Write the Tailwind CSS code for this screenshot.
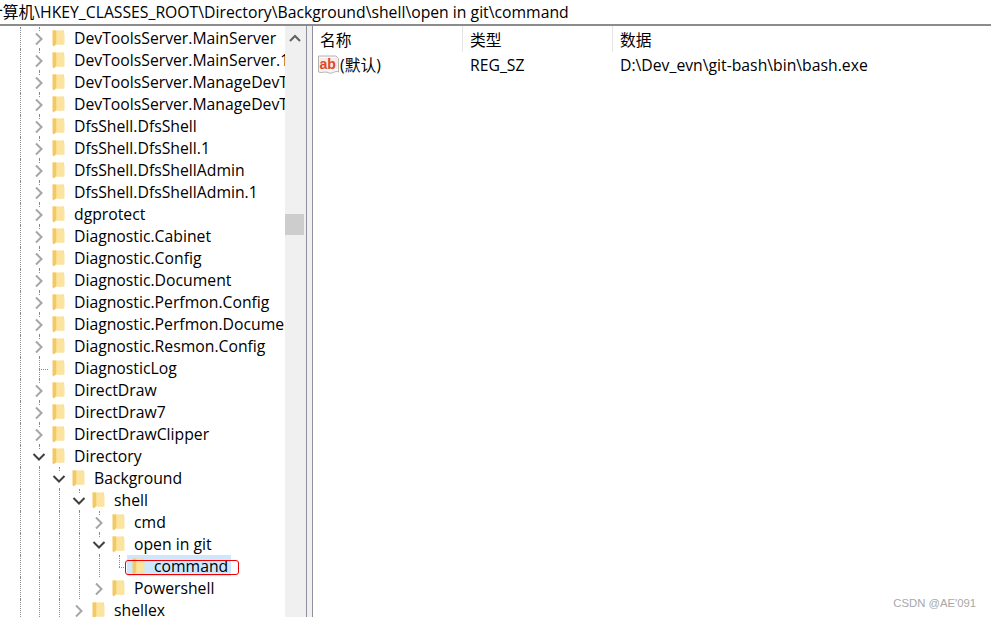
<!DOCTYPE html>
<html lang="en">
<head>
  <meta charset="UTF-8">
  <title>Registry Editor</title>
  <script src="https://cdn.jsdelivr.net/npm/@tailwindcss/browser@4"></script>
</head>
<body class="bg-white w-[991px] h-[617px] overflow-hidden text-[15.75px] leading-[22px] text-black font-['Open_Sans','Noto_Sans_CJK_SC',sans-serif]">
  <div class="h-[24px] whitespace-nowrap pt-px ml-[-13px]">计算机\HKEY_CLASSES_ROOT\Directory\Background\shell\open in git\command</div>
  <div class="h-[2px] bg-[#8c8c8c]"></div>
  <div class="relative flex h-[591px]">
    <div id="tree" class="w-[285px] shrink-0 overflow-hidden pt-px"></div>
    <div class="w-[19px] shrink-0 bg-[#f0f0f0] flex flex-col items-center">
      <svg class="mt-[8px]" width="12" height="8" viewBox="0 0 12 8"><path d="M1 7 L6 2 L11 7" fill="none" stroke="#606060" stroke-width="2"/></svg>
      <div class="mt-[172px] w-full h-[21px] bg-[#cdcdcd]"></div>
    </div>
    <div class="w-[2px] shrink-0 bg-[#f0f0f0]"></div>
    <div class="w-[1px] shrink-0 bg-[#8f8f9d]"></div>
    <div class="w-[5px] shrink-0 bg-[#f0f0f0]"></div>
    <div class="w-[1px] shrink-0 bg-[#8f8f9d]"></div>
    <div class="flex-1 min-w-0">
      <div class="flex h-[27px] leading-[29px]">
        <div class="w-[150px] pl-[7px] border-r border-[#e5e5e5] h-[26px]">名称</div>
        <div class="w-[150px] pl-[7px] border-r border-[#e5e5e5] h-[26px]">类型</div>
        <div class="pl-[7px]">数据</div>
      </div>
      <div class="flex h-[22px] mt-[1px] items-center">
        <div class="w-[150px] flex items-center pl-[5px]">
          <svg class="shrink-0" width="22" height="20" viewBox="0 0 22 20">
            <path d="M0.5 1 H18 L20.5 3.5 V17 C17 15 14 20 10 17.5 C7 16 4 18.5 0.5 17 Z" fill="#f7f7f7" stroke="#b4b4b4"/>
            <rect x="1.5" y="3" width="18" height="11" fill="#fbe9e4"/>
            <text x="1.5" y="13.5" font-size="14" font-weight="700" fill="#d8492c" font-family="Liberation Sans">ab</text>
          </svg>
          <span>(默认)</span>
        </div>
        <div class="w-[150px] pl-[7px]">REG_SZ</div>
        <div class="pl-[7px] whitespace-nowrap">D:\Dev_evn\git-bash\bin\bash.exe</div>
      </div>
    </div>
    <div class="absolute right-[15px] bottom-[6px] text-[11.3px] leading-[16px] text-[#a8a8a8] font-['Liberation_Sans',sans-serif]">CSDN @AE'091</div>
  </div>

  <script>
    // [name, level, state, guides]  state: c collapsed, o open, n leaf
    // guides = how many level lines run through the row, defaults to level + 1
    const rows = [
      ["DevToolsServer.MainServer", 0, "c"],
      ["DevToolsServer.MainServer.1", 0, "c"],
      ["DevToolsServer.ManageDevTools", 0, "c"],
      ["DevToolsServer.ManageDevTools.1", 0, "c"],
      ["DfsShell.DfsShell", 0, "c"],
      ["DfsShell.DfsShell.1", 0, "c"],
      ["DfsShell.DfsShellAdmin", 0, "c"],
      ["DfsShell.DfsShellAdmin.1", 0, "c"],
      ["dgprotect", 0, "c"],
      ["Diagnostic.Cabinet", 0, "c"],
      ["Diagnostic.Config", 0, "c"],
      ["Diagnostic.Document", 0, "c"],
      ["Diagnostic.Perfmon.Config", 0, "c"],
      ["Diagnostic.Perfmon.Document", 0, "c"],
      ["Diagnostic.Resmon.Config", 0, "c"],
      ["DiagnosticLog", 0, "n"],
      ["DirectDraw", 0, "c"],
      ["DirectDraw7", 0, "c"],
      ["DirectDrawClipper", 0, "c"],
      ["Directory", 0, "o"],
      ["Background", 1, "o"],
      ["shell", 2, "o"],
      ["cmd", 3, "c"],
      ["open in git", 3, "o"],
      ["command", 4, "n", 4],
      ["Powershell", 3, "c", 3],
      ["shellex", 2, "c", 2],
    ];

    const folder = `<svg class="shrink-0 mt-px" width="13" height="17" viewBox="0 0 13 17">
      <path d="M0.5 0.5 H12 V14.5 H3.5 Z" fill="#f9dc8c"/>
      <path d="M5 1 H9 L12.5 3 V14.5 H5 Z" fill="#fbe4a0"/>
      <path d="M0.5 0.5 H4 V14.5 L1.5 16.5 L0.5 15 Z" fill="#f3c964"/>
    </svg>`;
    const closed = `<svg width="10" height="14" viewBox="0 0 10 14"><path d="M2 1.5 L7.5 7 L2 12.5" fill="none" stroke="#a6a6a6" stroke-width="2"/></svg>`;
    const open = `<svg width="14" height="10" viewBox="0 0 14 10"><path d="M1.5 2 L7 7.5 L12.5 2" fill="none" stroke="#404040" stroke-width="2"/></svg>`;

    // x of the dotted guide for each level
    const guideX = l => 39 + l * 20;

    document.getElementById("tree").innerHTML = rows.map(([name, level, state, count = level + 1]) => {
      const xs = [20];
      for (let l = 0; l < count; l++) xs.push(guideX(l));
      const lines = xs.map(x =>
        `<span class="absolute top-0 h-[22px] border-l border-dotted border-[#8a8a8a]" style="left:${x}px"></span>`).join("");
      const cx = guideX(level);
      const toggle = state === "n"
        ? `<span class="absolute top-0 h-[12px] border-l border-dotted border-[#8a8a8a]" style="left:${cx}px"></span><span class="absolute top-[12px] w-[9px] border-t border-dotted border-[#8a8a8a]" style="left:${cx}px"></span>`
        : `<span class="absolute top-[4px] h-[16px] w-[16px] bg-white flex items-center justify-center" style="left:${cx - 8}px">${state === "c" ? closed : open}</span>`;
      const sel = name === "command";
      return `<div class="relative h-[22px] whitespace-nowrap">
        ${lines}${toggle}
        ${sel ? `<span class="absolute left-[127px] top-0 w-[104px] h-[21px] bg-[#cce8ff]"></span>` : ""}
        <div class="relative flex items-center h-[22px]" style="margin-left:${52 + level * 20}px">${folder}<span class="ml-[9px]">${name}</span></div>
        ${sel ? `<span class="absolute left-[125px] top-[5px] w-[114px] h-[15px] border border-[#f00000] rounded-[3px]"></span>` : ""}
      </div>`;
    }).join("");
  </script>
</body>
</html>
